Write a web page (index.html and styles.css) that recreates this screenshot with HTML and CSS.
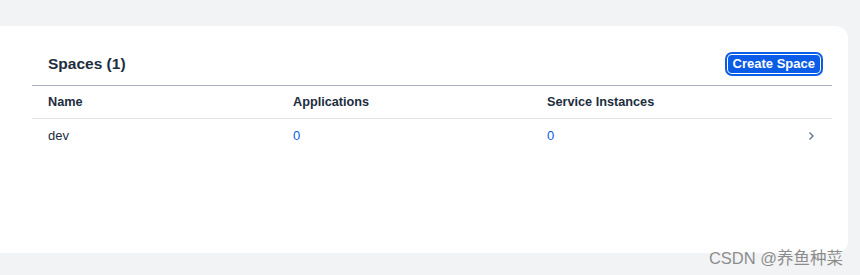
FILE: index.html
```html
<!DOCTYPE html>
<html lang="en">
<head>
<meta charset="utf-8">
<title>Spaces</title>
<link rel="stylesheet" href="styles.css">
</head>
<body>
<div class="page">
  <section class="card">
    <div class="toolbar">
      <h2 class="title">Spaces (1)</h2>
      <button class="btn-primary" type="button">Create Space</button>
    </div>
    <div class="table">
      <div class="row head">
        <div class="cell">Name</div>
        <div class="cell">Applications</div>
        <div class="cell">Service Instances</div>
        <div class="cell"></div>
      </div>
      <div class="row">
        <div class="cell">dev</div>
        <div class="cell link">0</div>
        <div class="cell link">0</div>
        <div class="cell nav">
          <svg class="chev" width="8" height="10" viewBox="0 0 8 10"><path d="M2.5 1.5 L6 5 L2.5 8.5" fill="none" stroke="#5a7089" stroke-width="1.3"/></svg>
        </div>
      </div>
    </div>
  </section>
  <div class="watermark">CSDN @养鱼种菜</div>
</div>
</body>
</html>
```
FILE: styles.css
```css
html, body {
  margin: 0;
  padding: 0;
}
body {
  background: #f2f3f4;
  font-family: "Liberation Sans", Arial, sans-serif;
  color: #1d2d3e;
  width: 860px;
  height: 275px;
  overflow: hidden;
}
.page {
  position: relative;
  padding: 26px 12px 0 0;
  height: 249px;
}
.card {
  background: #ffffff;
  border-radius: 0 12px 12px 0;
  height: 227px;
  padding: 0 16px 0 32px;
  box-sizing: border-box;
}
.toolbar {
  display: flex;
  align-items: center;
  justify-content: space-between;
  padding: 29px 12px 12px 16px;
  border-bottom: 1px solid #a8b1ba;
}
.title {
  margin: 0;
  font-size: 15.5px;
  font-weight: bold;
  line-height: 18px;
  color: #1d2d3e;
}
.btn-primary {
  height: 18px;
  padding: 0 5px;
  border: 0;
  border-radius: 4px;
  background: #0b5ce6;
  color: #ffffff;
  font-family: "Liberation Sans", Arial, sans-serif;
  font-size: 13px;
  font-weight: bold;
  line-height: 18px;
  box-shadow: 0 0 0 1px #ffffff, 0 0 0 3px #0b5ce6;
}
.row {
  display: grid;
  grid-template-columns: 245px 254px 1fr 40px;
  align-items: center;
  height: 33px;
  font-size: 13px;
}
.row.head {
  height: 32px;
  font-weight: bold;
  font-size: 12.7px;
  border-bottom: 1px solid #e1e4e7;
}
.cell {
  padding-left: 16px;
}
.link {
  color: #0b5ce6;
}
.nav {
  padding-left: 0;
  display: flex;
  padding-top: 1px;
}
.chev {
  display: block;
  margin-left: 15px;
}
.watermark {
  position: absolute;
  right: 17px;
  bottom: 8px;
  font-family: "Liberation Sans", "Noto Sans CJK SC", sans-serif;
  font-size: 16.5px;
  color: rgba(120, 120, 120, 0.85);
  line-height: 18px;
}
```
